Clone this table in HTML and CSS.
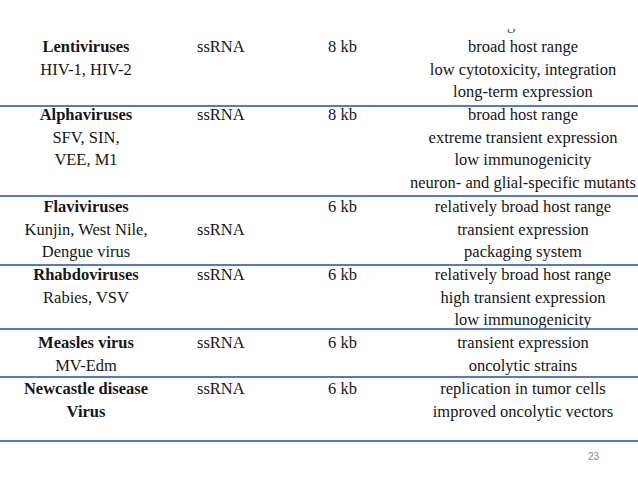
FILE: index.html
```html
<!DOCTYPE html>
<html>
<head>
<meta charset="utf-8">
<link rel="stylesheet" href="styles.css">
</head>
<body>
<div class="slide">
  <div class="table">
    <div class="row r1">
      <div class="cell name"><b>Lentiviruses</b><br>HIV-1, HIV-2</div>
      <div class="cell type">ssRNA</div>
      <div class="cell size">8 kb</div>
      <div class="cell props"><div class="cutoff" aria-hidden="true"><span class="cutoff-text">g</span></div>broad host range<br>low cytotoxicity, integration<br>long-term expression</div>
    </div>
    <div class="row r2">
      <div class="cell name"><b>Alphaviruses</b><br>SFV, SIN,<br>VEE, M1</div>
      <div class="cell type">ssRNA</div>
      <div class="cell size">8 kb</div>
      <div class="cell props">broad host range<br>extreme transient expression<br>low immunogenicity<br>neuron- and glial-specific mutants</div>
    </div>
    <div class="row r3">
      <div class="cell name"><b>Flaviviruses</b><br>Kunjin, West Nile,<br>Dengue virus</div>
      <div class="cell type second">ssRNA</div>
      <div class="cell size">6 kb</div>
      <div class="cell props">relatively broad host range<br>transient expression<br>packaging system</div>
    </div>
    <div class="row r4">
      <div class="cell name"><b>Rhabdoviruses</b><br>Rabies, VSV</div>
      <div class="cell type">ssRNA</div>
      <div class="cell size">6 kb</div>
      <div class="cell props">relatively broad host range<br>high transient expression<br>low immunogenicity</div>
    </div>
    <div class="row r5">
      <div class="cell name"><b>Measles virus</b><br>MV-Edm</div>
      <div class="cell type">ssRNA</div>
      <div class="cell size">6 kb</div>
      <div class="cell props">transient expression<br>oncolytic strains</div>
    </div>
    <div class="row r6">
      <div class="cell name"><b>Newcastle disease<br>Virus</b></div>
      <div class="cell type">ssRNA</div>
      <div class="cell size">6 kb</div>
      <div class="cell props">replication in tumor cells<br>improved oncolytic vectors</div>
    </div>
  </div>
  <div class="footer"><span class="page">23</span></div>
</div>
</body>
</html>
```

FILE: styles.css
```css
html, body {
  margin: 0;
  padding: 0;
  background: #ffffff;
}

.slide {
  width: 638px;
  height: 478px;
  overflow: hidden;
  font-family: "Liberation Serif", "Times New Roman", serif;
  font-size: 16.5px;
  line-height: 22.7px;
  color: #161616;
}

.table {
  display: flex;
  flex-direction: column;
}

.row {
  display: grid;
  grid-template-columns: 172px 156px 80px 230px;
  box-sizing: border-box;
  border-bottom: 2px solid #4f7dc0;
  align-items: start;
}

.r1 { height: 107px; padding-top: 39px; }
.r2 { height: 90px; padding-top: 0; }
.r3 { height: 69px; padding-top: 2px; }
.r4 { height: 64px; padding-top: 1px; overflow: hidden; }
.r5 { height: 48px; padding-top: 5px; }
.r6 { height: 64px; padding-top: 3px; }

.cell {
  margin-top: -3px;
  white-space: nowrap;
}

.name {
  text-align: center;
}

.name b {
  font-weight: bold;
}

.type {
  padding-left: 25px;
}

.type.second {
  padding-top: 22.7px;
}

.size {
  text-align: left;
}

.props {
  text-align: center;
}

/* bottom of a descender from a line hidden above the slide area */
.cutoff {
  height: 5px;
  margin-top: -7px;
  margin-bottom: 2px;
  overflow: hidden;
  padding-right: 24px;
  text-align: center;
}

.cutoff-text {
  display: block;
  margin-top: -16.5px;
  color: #555555;
}

.footer {
  display: flex;
  justify-content: flex-end;
  padding-top: 9px;
  padding-right: 39px;
}

.page {
  font-family: "Liberation Sans", Arial, sans-serif;
  font-size: 10px;
  line-height: 12px;
  color: #8a8a8a;
}
```
